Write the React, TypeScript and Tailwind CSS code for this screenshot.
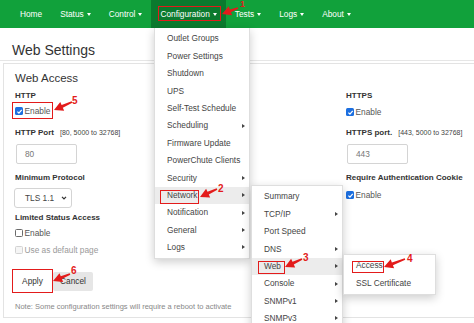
import React from "react";

type NavItem = { label: string; caret: boolean; active?: boolean };
type MenuItem = [string, boolean, boolean?];

const navItems: NavItem[] = [
  { label: "Home", caret: false },
  { label: "Status", caret: true },
  { label: "Control", caret: true },
  { label: "Configuration", caret: true, active: true },
  { label: "Tests", caret: true },
  { label: "Logs", caret: true },
  { label: "About", caret: true },
];

const configMenu: MenuItem[] = [
  ["Outlet Groups", false],
  ["Power Settings", false],
  ["Shutdown", false],
  ["UPS", false],
  ["Self-Test Schedule", false],
  ["Scheduling", true],
  ["Firmware Update", false],
  ["PowerChute Clients", false],
  ["Security", true],
  ["Network", true, true],
  ["Notification", true],
  ["General", true],
  ["Logs", true],
];

const networkMenu: MenuItem[] = [
  ["Summary", false],
  ["TCP/IP", true],
  ["Port Speed", false],
  ["DNS", true],
  ["Web", true, true],
  ["Console", true],
  ["SNMPv1", true],
  ["SNMPv3", true],
  ["Modbus", true],
];

const webMenu: MenuItem[] = [
  ["Access", false],
  ["SSL Certificate", false],
];

// annotation arrows: head point, tail point
const arrows = [
  [222, 14, 238, 8],
  [200, 197, 217, 189],
  [285, 267, 302, 259],
  [384, 267, 405, 259],
  [54, 110, 72, 102],
  [53, 281, 70, 274],
];

function arrowPoints(hx: number, hy: number, tx: number, ty: number) {
  const dx = tx - hx;
  const dy = ty - hy;
  const len = Math.hypot(dx, dy);
  const ux = dx / len;
  const uy = dy / len;
  const px = -uy;
  const py = ux;
  const bx = hx + ux * 9;
  const by = hy + uy * 9;
  const pts = [
    [hx, hy],
    [bx + px * 4.8, by + py * 4.8],
    [bx + px * 1.5, by + py * 1.5],
    [tx + px * 0.8, ty + py * 0.8],
    [tx - px * 0.8, ty - py * 0.8],
    [bx - px * 1.5, by - py * 1.5],
    [bx - px * 4.8, by - py * 4.8],
  ];
  return pts.map((p) => p.join(",")).join(" ");
}

function Check({ state }: { state: "on" | "off" | "disabled" }) {
  if (state === "on") {
    return (
      <span className="flex h-[8px] w-[8px] items-center justify-center rounded-[1.5px] bg-[#1c6fe0]">
        <svg viewBox="0 0 10 10" className="h-[7px] w-[7px]">
          <path d="M2 5.2 L4.2 7.4 L8.2 2.8" fill="none" stroke="#fff" strokeWidth="1.8" />
        </svg>
      </span>
    );
  }
  return (
    <span
      className={
        state === "off"
          ? "h-[8px] w-[8px] rounded-[1.5px] border border-[#6b6b6b] bg-white"
          : "h-[8px] w-[8px] rounded-[1.5px] border border-[#d2d2d2] bg-[#f5f5f5]"
      }
    />
  );
}

function CheckRow({ state, label, className }: { state: "on" | "off" | "disabled"; label: string; className: string }) {
  return (
    <div className={`flex h-[16px] items-center gap-[1.5px] ${className}`}>
      <Check state={state} />
      <span className={state === "disabled" ? "text-[8.3px] text-[#9a9a9a]" : "text-[8.3px] text-[#555]"}>{label}</span>
    </div>
  );
}

function Label({ children, className }: { children: React.ReactNode; className: string }) {
  return <div className={`h-[10px] text-[8px] font-bold leading-[10px] text-[#333] ${className}`}>{children}</div>;
}

function Menu({ items, className }: { items: MenuItem[]; className: string }) {
  return (
    <div className={`absolute bg-white py-[2px] shadow-[0_3px_9px_rgba(0,0,0,0.2)] ${className}`}>
      {items.map(([label, sub, hl]) => (
        <div
          key={label}
          className={`flex h-[17.4px] items-center justify-between pl-[12px] pr-[4px] text-[8.3px] text-[#444] ${
            hl ? "bg-[#ececec]" : ""
          }`}
        >
          <span>{label}</span>
          {sub && <span className="h-0 w-0 border-y-[2.5px] border-l-[3px] border-y-transparent border-l-[#444]" />}
        </div>
      ))}
    </div>
  );
}

export default function App() {
  return (
    <div className="relative h-[323px] w-[474px] overflow-hidden bg-white font-['Liberation_Sans',Arial,sans-serif]">
      {/* Top navigation */}
      <nav className="flex h-[28px] bg-[#11a13b] pl-[11px]">
        {navItems.map((it) => (
          <div
            key={it.label}
            className={`flex h-full items-center px-[9px] text-[8.3px] text-white ${it.active ? "bg-[#0b7a2e]" : ""}`}
          >
            {it.label}
            {it.caret && <span className="ml-[3px] h-0 w-0 border-x-[2.5px] border-t-[3px] border-x-transparent border-t-white" />}
          </div>
        ))}
      </nav>

      {/* Page header */}
      <div className="border-b border-[#e6e6e6] pb-[1px] pl-[12px] pt-[13px]">
        <h1 className="text-[14px] leading-[18px] text-[#333]">Web Settings</h1>
      </div>

      {/* Card */}
      <div className="ml-[3px] mt-[2px] w-[520px] border border-[#e3e3e3] pb-[5px] pl-[11px] pt-[6px]">
        <div className="text-[11.5px] leading-[16px] text-[#333]">Web Access</div>
        <div className="flex">
          <div className="w-[331px]">
            <Label className="mt-[5px]">HTTP</Label>
            <CheckRow state="on" label="Enable" className="mt-[2px]" />
            <Label className="mt-[9px] flex items-baseline gap-[6px]">
              <span>HTTP Port</span>
              <span className="text-[7px] font-normal text-[#444]">[80, 5000 to 32768]</span>
            </Label>
            <div className="ml-[1px] mt-[6px] flex h-[20px] w-[61px] items-center rounded-[2px] border border-[#d4d4d4] pl-[8px] text-[8.3px] text-[#777]">
              80
            </div>
            <Label className="mt-[9px]">Minimum Protocol</Label>
            <div className="ml-[-1px] mt-[5px] flex h-[20px] w-[58px] items-center justify-between rounded-[3px] border border-[#d4d4d4] pl-[10px] pr-[4px] text-[8.3px] text-[#444]">
              <span>TLS 1.1</span>
              <svg viewBox="0 0 8 6" className="h-[4px] w-[6px]">
                <path d="M1 1.2 L4 4.4 L7 1.2" fill="none" stroke="#333" strokeWidth="1.8" />
              </svg>
            </div>
            <Label className="mt-[5px]">Limited Status Access</Label>
            <CheckRow state="off" label="Enable" className="mt-[2px]" />
            <CheckRow state="disabled" label="Use as default page" className="mt-[1px]" />
            <div className="ml-[-3px] mt-[11px] flex h-[24px] items-center">
              <button className="h-[24px] w-[41px] border-[1.5px] border-[#e31b1b] bg-white text-[8.3px] text-[#333]">
                Apply
              </button>
              <button className="h-[19px] w-[40px] rounded-[2px] bg-[#e6e6e6] text-[8.3px] text-[#333]">Cancel</button>
            </div>
          </div>
          <div>
            <Label className="mt-[5px]">HTTPS</Label>
            <CheckRow state="on" label="Enable" className="mt-[3px]" />
            <Label className="mt-[8px] flex items-baseline gap-[6px]">
              <span>HTTPS port.</span>
              <span className="text-[7px] font-normal text-[#444]">[443, 5000 to 32768]</span>
            </Label>
            <div className="ml-[1px] mt-[6px] flex h-[20px] w-[61px] items-center rounded-[2px] border border-[#d4d4d4] pl-[8px] text-[8.3px] text-[#777]">
              443
            </div>
            <Label className="mt-[9px]">Require Authentication Cookie</Label>
            <CheckRow state="on" label="Enable" className="mt-[4px]" />
          </div>
        </div>
        <div className="mt-[9px] h-[10px] text-[7.5px] leading-[10px] text-[#888]">
          Note: Some configuration settings will require a reboot to activate
        </div>
      </div>

      {/* Open dropdown menus */}
      <Menu items={configMenu} className="left-[154px] top-[28px] w-[96px] border border-t-0 border-[#dedede]" />
      <Menu items={networkMenu} className="left-[251px] top-[185px] w-[92px] border border-[#dedede]" />
      <Menu items={webMenu} className="left-[343px] top-[254px] w-[93px] border border-[#dedede]" />

      {/* Annotation boxes */}
      <div className="pointer-events-none absolute left-[158px] top-[5.5px] h-[15.5px] w-[63px] border-[1.5px] border-[#e31b1b]" />
      <div className="pointer-events-none absolute left-[12px] top-[102px] h-[17px] w-[41px] border-[1.5px] border-[#e31b1b]" />
      <div className="pointer-events-none absolute left-[160px] top-[190px] h-[13.5px] w-[39px] border-[1.5px] border-[#e31b1b]" />
      <div className="pointer-events-none absolute left-[257.5px] top-[261px] h-[12.5px] w-[27px] border-[1.5px] border-[#e31b1b]" />
      <div className="pointer-events-none absolute left-[351.5px] top-[261px] h-[12px] w-[32px] border-[1.5px] border-[#e31b1b]" />

      <svg className="pointer-events-none absolute left-0 top-0 h-[323px] w-[474px]" viewBox="0 0 474 323">
        {arrows.map(([hx, hy, tx, ty], i) => (
          <polygon key={i} points={arrowPoints(hx, hy, tx, ty)} fill="#e31b1b" />
        ))}
      </svg>

      <span className="absolute left-[240px] top-[0px] text-[8.5px] font-bold leading-none text-[#e31b1b]">1</span>
      <span className="absolute left-[218px] top-[184px] text-[10px] font-bold leading-none text-[#e31b1b]">2</span>
      <span className="absolute left-[303px] top-[253px] text-[10px] font-bold leading-none text-[#e31b1b]">3</span>
      <span className="absolute left-[407px] top-[254px] text-[10px] font-bold leading-none text-[#e31b1b]">4</span>
      <span className="absolute left-[72px] top-[96px] text-[10px] font-bold leading-none text-[#e31b1b]">5</span>
      <span className="absolute left-[71px] top-[266px] text-[10px] font-bold leading-none text-[#e31b1b]">6</span>
    </div>
  );
}
